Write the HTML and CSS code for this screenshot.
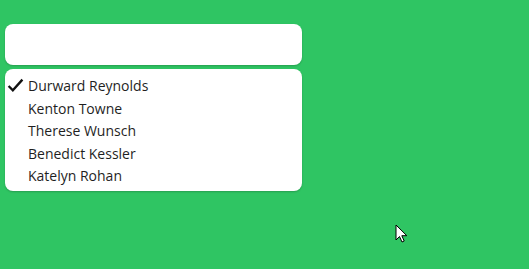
FILE: index.html
```html
<!DOCTYPE html>
<html lang="en">
<head>
  <meta charset="UTF-8">
  <title>Listbox</title>
  <link rel="stylesheet" href="styles.css">
</head>
<body>
  <div class="picker">
    <button class="picker-button" type="button"></button>
    <ul class="picker-options">
      <li class="option selected">
        <svg class="check" viewBox="0 0 16 16" width="17" height="17"><path d="M1.5 8.5l4 4 9-10" fill="none" stroke="#111" stroke-width="2.2"/></svg>
        Durward Reynolds
      </li>
      <li class="option">Kenton Towne</li>
      <li class="option">Therese Wunsch</li>
      <li class="option">Benedict Kessler</li>
      <li class="option">Katelyn Rohan</li>
    </ul>
  </div>

  <svg class="cursor" viewBox="0 0 14 20" width="14" height="20"><path d="M1 1v15l3.5-3.5 2.5 5.5 2.2-1-2.4-5.3h5z" fill="#fff" stroke="#000" stroke-width="1"/></svg>
</body>
</html>
```

FILE: styles.css
```css
html, body {
  height: 100%;
}
body {
  margin: 0;
  background-color: #2fc563;
  font-family: "Open Sans", "Noto Sans", sans-serif;
  font-size: 14px;
  color: #1f1f1f;
}
.picker {
  width: 297px;
  padding: 24px 0 0 5px;
}
.picker-button {
  display: block;
  width: 100%;
  height: 41px;
  border: none;
  border-radius: 8px;
  background-color: #fff;
  box-shadow: 0 1px 2px rgba(0, 0, 0, 0.2);
}
.picker-options {
  list-style: none;
  margin: 4px 0 0;
  padding: 6px 0 3px;
  background-color: #fff;
  border-radius: 8px;
  box-shadow: 0 1px 2px rgba(0, 0, 0, 0.2);
}
.option {
  position: relative;
  height: 22.5px;
  line-height: 22.5px;
  padding-left: 23px;
}
.check {
  position: absolute;
  left: 2px;
  top: 2px;
}
.cursor {
  position: absolute;
  left: 395px;
  top: 224px;
}
```
